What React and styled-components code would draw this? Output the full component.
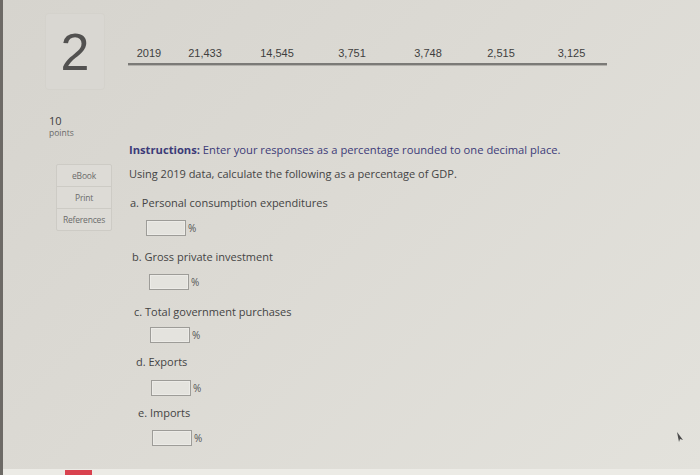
import React from "react";
import styled, { createGlobalStyle } from "styled-components";

const Global = createGlobalStyle`
  html, body { margin: 0; padding: 0; width: 700px; height: 475px; overflow: hidden; }
  body { font-family: "Open Sans", "Liberation Sans", sans-serif; }
`;

const Page = styled.div`
  position: relative;
  width: 700px;
  height: 475px;
  box-sizing: border-box;
  border-left: 3px solid #6d6a66;
  background: linear-gradient(135deg, #d6d4ce 0%, #dcdad4 45%, #e3e2dc 100%);
  display: flex;
  flex-direction: column;
  overflow: hidden;
`;

const Header = styled.div`
  display: flex;
  align-items: flex-start;
  padding: 14px 0 0 43px;
`;

const NumberBox = styled.div`
  width: 58px;
  height: 75px;
  border-radius: 3px;
  background: #d9d7d2;
  box-shadow: 0 0 0 1px #d4d2cc;
  display: flex;
  align-items: center;
  justify-content: center;
  font-family: "Liberation Sans", Arial, sans-serif;
  font-size: 52px;
  font-weight: 400;
  color: #525150;
  line-height: 1;
`;

const Table = styled.div`
  margin: 32px 0 0 24px;
  width: 479px;
  display: grid;
  grid-template-columns: 42px 70px 74px 76px 76px 70px 71px;
  border-bottom: 2px solid #7b7a77;
  box-shadow: 0 1px 0 #b3b1ac;
  padding-bottom: 3px;
`;

const Cell = styled.div`
  text-align: center;
  font-family: "Liberation Sans", Arial, sans-serif;
  font-size: 11px;
  color: #3f3f3f;
  line-height: 14px;
`;

const Body = styled.div`
  display: flex;
  align-items: flex-start;
  padding: 25px 0 0 46px;
`;

const Sidebar = styled.div`
  width: 80px;
  display: flex;
  flex-direction: column;
`;

const Points = styled.div`
  font-size: 11px;
  line-height: 13px;
  color: #3d3d3d;
`;

const PointsLabel = styled.div`
  font-size: 8.5px;
  color: #6a6a6a;
  line-height: 12px;
`;

const ToolList = styled.div`
  margin: 25px 0 0 7px;
  width: 54px;
  display: flex;
  flex-direction: column;
  border: 1px solid #cdcbc5;
  border-radius: 2px;
  background: #dddbd6;
`;

const Tool = styled.div`
  height: 21px;
  display: flex;
  align-items: center;
  justify-content: center;
  font-size: 8.5px;
  letter-spacing: -0.2px;
  color: #6b6b6b;
  & + & { border-top: 1px solid #cdcbc5; }
`;

const Content = styled.div`
  display: flex;
  flex-direction: column;
  padding-top: 28px;
`;

const Instructions = styled.div`
  font-size: 11.2px;
  line-height: 16px;
  color: #3c3b78;
  margin-bottom: 8px;
`;

const Strong = styled.span`
  font-weight: 700;
`;

const Line = styled.div`
  font-size: 11px;
  line-height: 16px;
  color: #444;
  margin-left: ${(p) => p.indent || 0}px;
  margin-top: ${(p) => p.gap || 0}px;
`;

const AnswerRow = styled.div`
  display: flex;
  align-items: center;
  margin-left: ${(p) => p.indent}px;
  margin-top: ${(p) => p.gap}px;
  height: 16px;
`;

const Box = styled.div`
  width: 38px;
  height: 14px;
  border: 1px solid #9d9c98;
  background: #e4e3de;
  box-shadow: inset 0 0 0 1px #ecebe7;
`;

const Pct = styled.span`
  font-size: 10px;
  color: #555;
  margin-left: 2px;
`;

const BottomBand = styled.div`
  position: absolute;
  left: 0;
  right: 0;
  bottom: 0;
  height: 6px;
  background: #ecebe6;
`;

const RedTab = styled.div`
  position: absolute;
  left: 62px;
  bottom: 0;
  width: 27px;
  height: 5px;
  background: #d9424f;
`;

const Cursor = styled.svg`
  position: absolute;
  left: 672px;
  top: 431px;
`;

const numbers = ["2019", "21,433", "14,545", "3,751", "3,748", "2,515", "3,125"];

const items = [
  { label: "a. Personal consumption expenditures", li: 1, bi: 17, gap: 13, bgap: 9 },
  { label: "b. Gross private investment", li: 3, bi: 20, gap: 13, bgap: 9 },
  { label: "c. Total government purchases", li: 5, bi: 21, gap: 14, bgap: 7 },
  { label: "d. Exports", li: 7, bi: 22, gap: 11, bgap: 10 },
  { label: "e. Imports", li: 9, bi: 23, gap: 9, bgap: 9 },
];

export default function App() {
  return (
    <>
      <Global />
      <Page>
        <Header>
          <NumberBox>2</NumberBox>
          <Table>
            {numbers.map((n) => (
              <Cell key={n}>{n}</Cell>
            ))}
          </Table>
        </Header>
        <Body>
          <Sidebar>
            <Points>10</Points>
            <PointsLabel>points</PointsLabel>
            <ToolList>
              <Tool>eBook</Tool>
              <Tool>Print</Tool>
              <Tool>References</Tool>
            </ToolList>
          </Sidebar>
          <Content>
            <Instructions>
              <Strong>Instructions:</Strong> Enter your responses as a percentage rounded to one decimal place.
            </Instructions>
            <Line>Using 2019 data, calculate the following as a percentage of GDP.</Line>
            {items.map((it) => (
              <React.Fragment key={it.label}>
                <Line indent={it.li} gap={it.gap}>{it.label}</Line>
                <AnswerRow indent={it.bi} gap={it.bgap}>
                  <Box />
                  <Pct>%</Pct>
                </AnswerRow>
              </React.Fragment>
            ))}
          </Content>
        </Body>
        <BottomBand />
        <RedTab />
        <Cursor width="10" height="12" viewBox="0 0 10 12">
          <path d="M2 1 L8 9 L5 8 L4 11 Z" fill="#4a4a4a" />
        </Cursor>
      </Page>
    </>
  );
}
